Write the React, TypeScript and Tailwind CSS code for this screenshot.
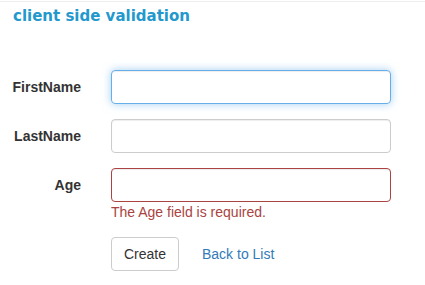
export default function App() {
  return (
    <div className="h-[285px] w-[425px] overflow-hidden bg-white font-['Liberation_Sans',Arial,sans-serif] text-[14px] leading-[20px] text-[#333]">
      <div className="mt-[1px] border-t border-[#eeeeee]" />
      <h2 className="pl-[13px] pt-[4px] font-['DejaVu_Sans',Verdana,sans-serif] text-[15px] font-bold leading-[20px] text-[#2398cd]">
        client side validation
      </h2>

      <form className="mt-[44px] flex flex-col">
        <div className="flex items-center">
          <label className="w-[81px] text-right font-bold">FirstName</label>
          <input
            type="text"
            className="ml-[30px] h-[34px] w-[280px] rounded-[4px] border border-[#66afe9] px-3 shadow-[inset_0_1px_1px_rgba(0,0,0,0.075),0_0_8px_rgba(102,175,233,0.6)] outline-none"
          />
        </div>

        <div className="mt-[15px] flex items-center">
          <label className="w-[81px] text-right font-bold">LastName</label>
          <input
            type="text"
            className="ml-[30px] h-[34px] w-[280px] rounded-[4px] border border-[#cccccc] px-3 shadow-[inset_0_1px_1px_rgba(0,0,0,0.075)] outline-none"
          />
        </div>

        <div className="mt-[15px] flex items-start">
          <label className="w-[81px] pt-[7px] text-right font-bold">Age</label>
          <div className="ml-[30px] flex flex-col">
            <input
              type="text"
              className="h-[34px] w-[280px] rounded-[4px] border border-[#a94442] px-3 shadow-[inset_0_1px_1px_rgba(0,0,0,0.075)] outline-none"
            />
            <span className="text-[#a94442]">The Age field is required.</span>
          </div>
        </div>

        <div className="mt-[15px] flex items-center pl-[111px]">
          <button
            type="button"
            className="h-[34px] w-[68px] rounded-[4px] border border-[#cccccc] bg-white text-[14px] text-[#333]"
          >
            Create
          </button>
          <a href="#" className="ml-[23px] text-[#337ab7]">
            Back to List
          </a>
        </div>
      </form>
    </div>
  );
}
